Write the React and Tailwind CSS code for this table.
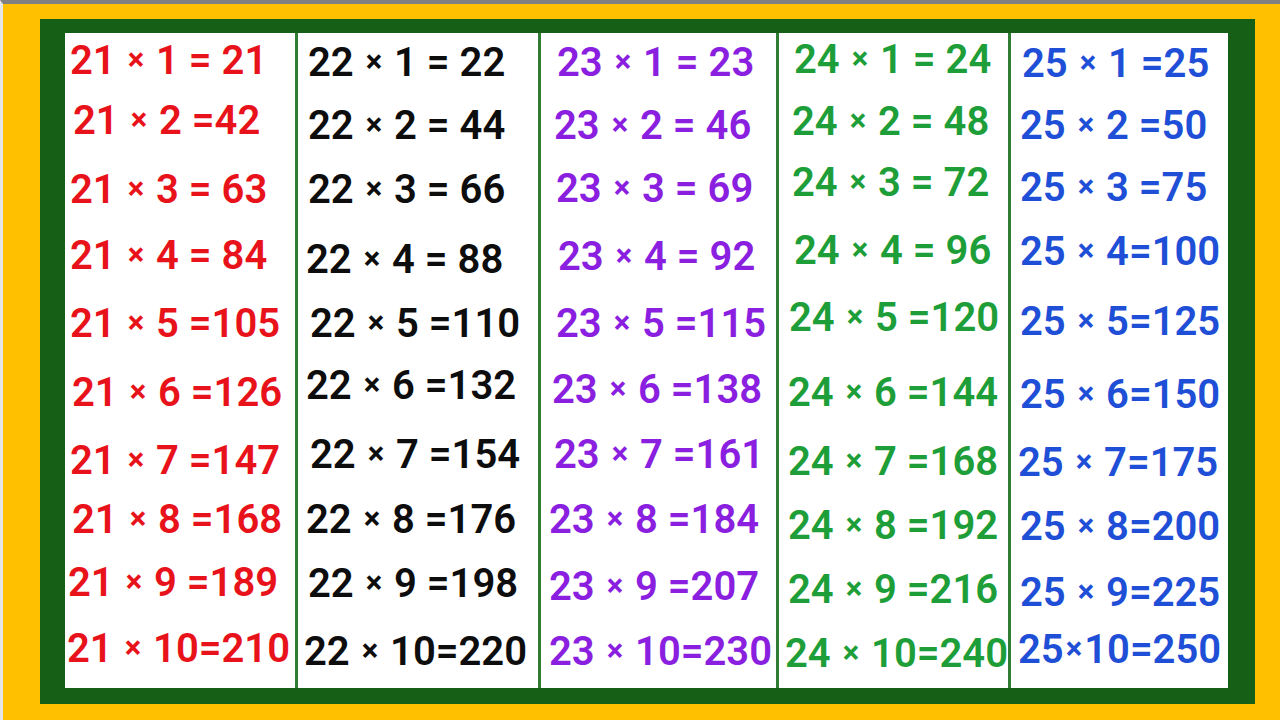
import React from "react";

// 21–25 multiplication tables, one coloured column each.
// Each row: [text, offset classes] — the source picture is hand-set, so rows wobble a little.
const columns = [
  {
    color: "text-[#e8121b]",
    width: "w-[233px]",
    pad: "pl-[5px]",
    rows: [
      ["21 × 1 = 21", "-translate-y-[2px]"],
      ["21 × 2 =42", "translate-x-[3px] -translate-y-[7px]"],
      ["21 × 3 = 63", "-translate-y-[3px]"],
      ["21 × 4 = 84", "-translate-y-[3px]"],
      ["21 × 5 =105", ""],
      ["21 × 6 =126", "translate-x-[2px] translate-y-[3px]"],
      ["21 × 7 =147", "translate-y-[6px]"],
      ["21 × 8 =168", "translate-x-[2px]"],
      ["21 × 9 =189", "-translate-x-[2px] -translate-y-[3px]"],
      ["21 × 10=210", "-translate-x-[3px] -translate-y-[2px]"],
    ],
  },
  {
    color: "text-[#0d0d0d]",
    width: "w-[243px]",
    pad: "pl-[10px]",
    rows: [
      ["22 × 1 = 22", ""],
      ["22 × 2 = 44", "-translate-y-[2px]"],
      ["22 × 3 = 66", "-translate-y-[3px]"],
      ["22 × 4 = 88", "-translate-x-[2px] translate-y-[1px]"],
      ["22 × 5 =110", "translate-x-[2px]"],
      ["22 × 6 =132", "-translate-x-[2px] -translate-y-[4px]"],
      ["22 × 7 =154", "translate-x-[2px]"],
      ["22 × 8 =176", "-translate-x-[2px]"],
      ["22 × 9 =198", "-translate-y-[2px]"],
      ["22 × 10=220", "-translate-x-[4px] translate-y-[1px]"],
    ],
  },
  {
    color: "text-[#8a1fe0]",
    width: "w-[238px]",
    pad: "pl-[13px]",
    rows: [
      ["23 × 1 = 23", "translate-x-[3px]"],
      ["23 × 2 = 46", "-translate-y-[2px]"],
      ["23 × 3 = 69", "translate-x-[2px] -translate-y-[4px]"],
      ["23 × 4 = 92", "translate-x-[4px] -translate-y-[2px]"],
      ["23 × 5 =115", "translate-x-[2px]"],
      ["23 × 6 =138", "-translate-x-[2px]"],
      ["23 × 7 =161", ""],
      ["23 × 8 =184", "-translate-x-[5px]"],
      ["23 × 9 =207", "-translate-x-[5px] translate-y-[1px]"],
      ["23 × 10=230", "-translate-x-[5px] translate-y-[1px]"],
    ],
  },
  {
    color: "text-[#1e9e38]",
    width: "w-[232px]",
    pad: "pl-[12px]",
    rows: [
      ["24 × 1 = 24", "translate-x-[3px] -translate-y-[3px]"],
      ["24 × 2 = 48", "translate-x-[1px] -translate-y-[6px]"],
      ["24 × 3 = 72", "translate-x-[1px] -translate-y-[10px]"],
      ["24 × 4 = 96", "translate-x-[3px] -translate-y-[8px]"],
      ["24 × 5 =120", "-translate-x-[2px] -translate-y-[6px]"],
      ["24 × 6 =144", "-translate-x-[3px] translate-y-[3px]"],
      ["24 × 7 =168", "-translate-x-[3px] translate-y-[7px]"],
      ["24 × 8 =192", "-translate-x-[3px] translate-y-[6px]"],
      ["24 × 9 =216", "-translate-x-[3px] translate-y-[4px]"],
      ["24 × 10=240", "-translate-x-[6px] translate-y-[3px]"],
    ],
  },
  {
    color: "text-[#1f4fd6]",
    width: "w-[217px]",
    pad: "pl-[9px]",
    rows: [
      ["25 × 1 =25", "translate-x-[2px] translate-y-[1px]"],
      ["25 × 2 =50", "-translate-y-[2px]"],
      ["25 × 3 =75", "-translate-y-[5px]"],
      ["25 × 4=100", "-translate-y-[7px]"],
      ["25 × 5=125", "-translate-y-[2px]"],
      ["25 × 6=150", "translate-y-[5px]"],
      ["25 × 7=175", "-translate-x-[2px] translate-y-[8px]"],
      ["25 × 8=200", "translate-y-[7px]"],
      ["25 × 9=225", "translate-y-[7px]"],
      ["25×10=250", "-translate-x-[2px] -translate-y-[1px]"],
    ],
  },
];

// the × sign in the source is set smaller than the digits
function Equation({ text }) {
  const [left, right] = text.split("×");
  return (
    <>
      {left}
      <span className="relative -top-[4px] mx-[2px] inline-block text-[31px] font-bold leading-none">×</span>
      {right}
    </>
  );
}

export default function App() {
  return (
    <div className="h-[720px] w-[1280px] overflow-hidden border-l-[3px] border-t-4 border-l-[#e6e6e6] border-t-[#808080] bg-[#ffc000] pl-[37px] pt-[15px]">
      <div className="h-[685px] w-[1215px] bg-[#165f17] pb-[16px] pl-[25px] pr-[27px] pt-[14px]">
        <div className="flex h-full bg-white" style={{ fontFamily: "Roboto, 'Liberation Sans', sans-serif" }}>
          {columns.map((col, i) => (
            <div
              key={i}
              className={`${col.width} ${col.pad} ${col.color} flex h-full flex-col ${i < 4 ? "border-r-[3px] border-[#2f7d32]" : ""}`}
            >
              <div className="-mt-[3px] flex flex-col">
                {col.rows.map(([r, off]) => (
                  <div key={r} className="flex h-[65.4px] items-center whitespace-pre text-[40px] font-semibold leading-none">
                    <span className={`inline-block ${off}`}>
                      <Equation text={r} />
                    </span>
                  </div>
                ))}
              </div>
            </div>
          ))}
        </div>
      </div>
    </div>
  );
}
